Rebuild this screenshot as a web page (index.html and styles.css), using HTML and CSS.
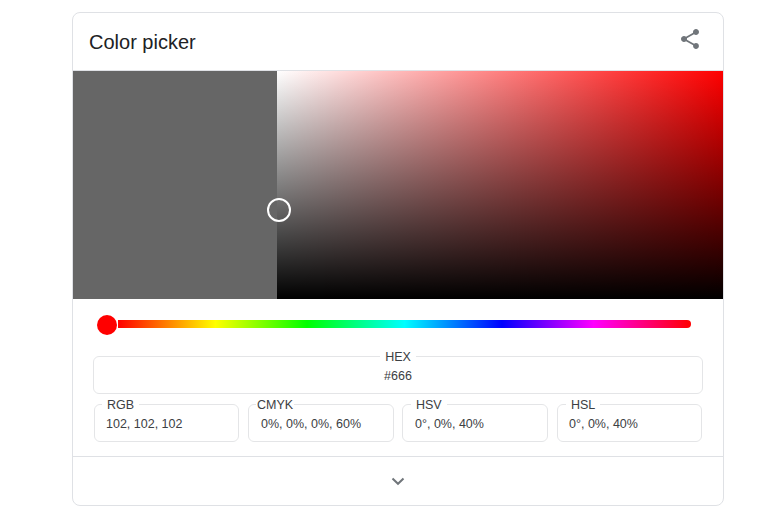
FILE: index.html
```html
<!DOCTYPE html>
<html lang="en">
<head>
<meta charset="utf-8">
<title>Color picker</title>
<link rel="stylesheet" href="styles.css">
</head>
<body>
<main class="card">
  <header class="head">
    <h1 class="title">Color picker</h1>
    <svg class="share" viewBox="0 0 24 24" width="24" height="24" aria-hidden="true"><path d="M18 16.08c-.76 0-1.44.3-1.96.77L8.91 12.7c.05-.23.09-.46.09-.7s-.04-.47-.09-.7l7.05-4.11c.54.5 1.25.81 2.04.81 1.66 0 3-1.34 3-3s-1.34-3-3-3-3 1.34-3 3c0 .24.04.47.09.7L8.04 9.81C7.5 9.31 6.79 9 6 9c-1.66 0-3 1.34-3 3s1.34 3 3 3c.79 0 1.5-.31 2.04-.81l7.12 4.16c-.05.21-.08.43-.08.65 0 1.61 1.31 2.92 2.92 2.92s2.92-1.31 2.92-2.92-1.31-2.92-2.92-2.92z"/></svg>
  </header>
  <section class="picker">
    <div class="swatch"></div>
    <div class="field"></div>
    <div class="handle"></div>
  </section>
  <div class="slider">
    <div class="track"></div>
    <div class="thumb"></div>
  </div>
  <section class="values">
    <fieldset class="box box-hex"><legend class="label label-hex">HEX</legend><div class="value value-hex">#666</div></fieldset>
    <div class="row">
      <fieldset class="box box-rgb"><legend class="label">RGB</legend><div class="value">102, 102, 102</div></fieldset>
      <fieldset class="box box-cmyk"><legend class="label label-tight">CMYK</legend><div class="value value-cmyk">0%, 0%, 0%, 60%</div></fieldset>
      <fieldset class="box box-hsv"><legend class="label label-shift">HSV</legend><div class="value value-shift">0°, 0%, 40%</div></fieldset>
      <fieldset class="box box-hsl"><legend class="label label-shift">HSL</legend><div class="value">0°, 0%, 40%</div></fieldset>
    </div>
  </section>
  <footer class="foot">
    <svg class="chevron" viewBox="0 0 14 9" width="14" height="9" aria-hidden="true"><path d="M1.5 1.5 7 6.8l5.5-5.3" fill="none" stroke-width="2"/></svg>
  </footer>
</main>
</body>
</html>
```
FILE: styles.css
```css
* { box-sizing: border-box; }
html, body { margin: 0; background: #fff; }
body {
  padding: 12px 0 0 72px;
  font-family: "Liberation Sans", Arial, sans-serif;
  color: #202124;
}
.card {
  width: 652px;
  height: 494px;
  border: 1px solid #dfe1e5;
  border-radius: 8px;
  display: flex;
  flex-direction: column;
  overflow: hidden;
}
.head {
  height: 58px;
  flex: none;
  display: flex;
  align-items: center;
  justify-content: space-between;
  padding: 0 21px 0 16px;
  border-bottom: 1px solid #dfe1e5;
}
.title {
  margin: 0;
  font-size: 20px;
  font-weight: 400;
  line-height: 26px;
  color: #202124;
}
.share { fill: #70757a; margin-bottom: 5px; }
.picker {
  position: relative;
  height: 228px;
  flex: none;
  display: flex;
}
.swatch { width: 204px; background: #666; }
.field {
  flex: 1;
  background:
    linear-gradient(to top, #000, rgba(0, 0, 0, 0)),
    linear-gradient(to right, #fff, #f00);
}
.handle {
  position: absolute;
  left: 194px;
  top: 127px;
  width: 24px;
  height: 24px;
  border: 2px solid #fff;
  border-radius: 50%;
}
.slider {
  position: relative;
  height: 49px;
  flex: none;
  padding: 21px 32px 0 45px;
}
.track {
  height: 8px;
  border-radius: 0 4px 4px 0;
  background: linear-gradient(to right, #f00 0%, #ff0 17%, #0f0 33%, #0ff 50%, #00f 67%, #f0f 83%, #f00 100%);
}
.thumb {
  position: absolute;
  left: 24px;
  top: 16px;
  width: 20px;
  height: 20px;
  border-radius: 50%;
  background: #f00;
}
.values {
  flex: none;
  padding: 0 20px;
}
.box {
  margin: 0;
  padding: 0;
  min-width: 0;
  border: 1px solid #e4e5e7;
  border-radius: 6px;
}
.box-hex { height: 46px; width: 610px; }
.label {
  padding: 2px 5px 0;
  font-size: 12.5px;
  line-height: 15px;
  color: #3c4043;
  margin-left: 7px;
}
.label-hex { margin: 0 auto; font-size: 12.5px; }
.label-tight { padding: 2px 1px 0; }
.label-shift { margin-left: 8px; }
.value {
  font-size: 12.5px;
  line-height: 15px;
  color: #3c4043;
  margin-top: 4px;
  padding-left: 11px;
}
.value-hex { text-align: center; padding-left: 0; }
.value-cmyk { padding-left: 12px; }
.value-shift { padding-left: 12px; }
.row {
  display: flex;
  margin: 2px 0 0 1px;
}
.box-rgb { width: 145px; height: 46px; margin-right: 9px; }
.box-cmyk { width: 146px; height: 46px; margin-right: 8px; }
.box-hsv { width: 146px; height: 46px; margin-right: 9px; }
.box-hsl { width: 145px; height: 46px; }
.foot {
  margin-top: auto;
  height: 49px;
  flex: none;
  border-top: 1px solid #dfe1e5;
  display: flex;
  align-items: center;
  justify-content: center;
}
.chevron { stroke: #70757a; margin-top: 1px; }
```
